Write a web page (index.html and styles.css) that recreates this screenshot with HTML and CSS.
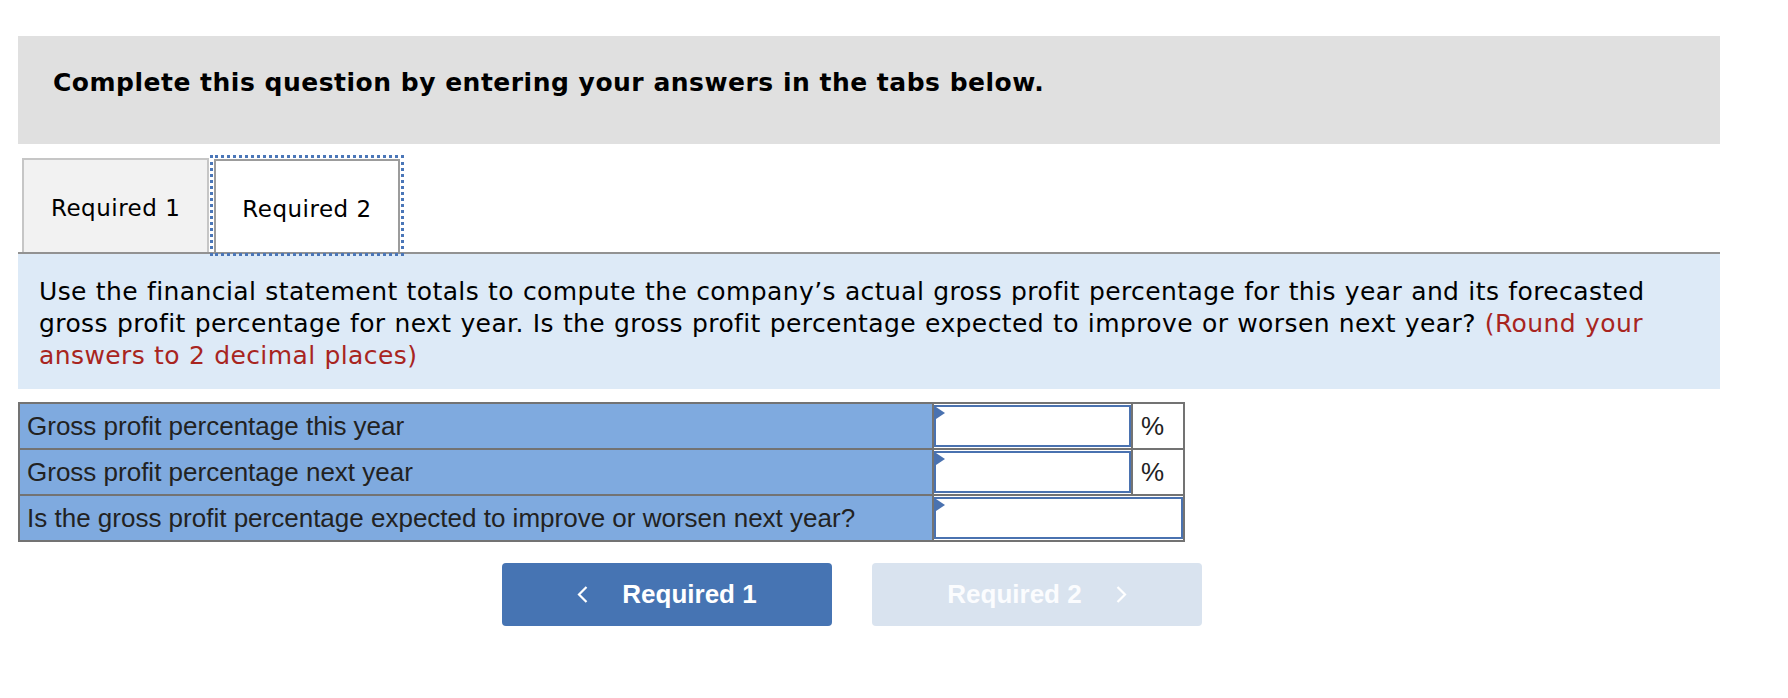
FILE: index.html
```html
<!DOCTYPE html>
<html lang="en">
<head>
<meta charset="utf-8">
<title>Required 2</title>
<link rel="stylesheet" href="styles.css">
</head>
<body>
<div class="page">
  <div class="prompt">Complete this question by entering your answers in the tabs below.</div>

  <div class="tabs">
    <div class="tab">Required 1</div>
    <div class="tab tab-active">Required 2</div>
  </div>

  <div class="question">Use the financial statement totals to compute the company’s actual gross profit percentage for this year and its forecasted gross profit percentage for next year. Is the gross profit percentage expected to improve or worsen next year? <span class="note">(Round your answers to 2 decimal places)</span></div>

  <div class="answers">
    <div class="label">Gross profit percentage this year</div>
    <div class="entry"><input class="field" type="text"><span class="flag"></span></div>
    <div class="unit">%</div>

    <div class="label">Gross profit percentage next year</div>
    <div class="entry"><input class="field" type="text"><span class="flag"></span></div>
    <div class="unit">%</div>

    <div class="label">Is the gross profit percentage expected to improve or worsen next year?</div>
    <div class="entry entry-wide"><input class="field" type="text"><span class="flag"></span></div>
  </div>

  <div class="nav">
    <button class="nav-btn" type="button">
      <svg class="chev" width="11" height="17" viewBox="0 0 11 17"><polyline points="9.5,1 2,8.5 9.5,16" fill="none" stroke="#fff" stroke-width="2.2"/></svg>
      <span>Required 1</span>
    </button>
    <button class="nav-btn disabled" type="button">
      <span>Required 2</span>
      <svg class="chev" width="11" height="17" viewBox="0 0 11 17"><polyline points="1.5,1 9,8.5 1.5,16" fill="none" stroke="#fff" stroke-width="2.2"/></svg>
    </button>
  </div>
</div>
</body>
</html>
```

FILE: styles.css
```css
body {
  margin: 0;
  background: #fff;
}

.page {
  width: 1702px;
  padding: 36px 0 0 18px;
}

.prompt {
  background: #e0e0e0;
  padding: 33px 35px 47px;
  font: bold 25px/28px "DejaVu Sans", Verdana, sans-serif;
  letter-spacing: 0.5px;
  color: #000;
}

.tabs {
  display: flex;
  align-items: flex-end;
  gap: 5px;
  margin-top: 14px;
  padding-left: 4px;
  border-bottom: 2px solid #929292;
}

.tab {
  box-sizing: border-box;
  height: 94px;
  padding: 4px 27px 0;
  display: flex;
  align-items: center;
  border: 2px solid #c6c6c6;
  border-bottom: 0;
  background: #f2f2f2;
  font: 23px "DejaVu Sans", Verdana, sans-serif;
  letter-spacing: 0.5px;
  color: #000;
}

.tab-active {
  height: 93px;
  padding-left: 26px;
  padding-right: 26px;
  background: #fff;
  border-color: #9c9c9c;
  outline: 3px dotted #4a76b8;
  outline-offset: 1px;
}

.question {
  background: #ddeaf7;
  padding: 22px 21px 17px;
  font: 25px/32px "DejaVu Sans", Verdana, sans-serif;
  letter-spacing: 0.4px;
  word-spacing: 0.6px;
  color: #000;
}

.note {
  color: #a8251f;
}

.answers {
  display: grid;
  grid-template-columns: 912px 197px 50px;
  grid-auto-rows: 44px;
  gap: 2px;
  padding: 2px;
  width: max-content;
  margin-top: 13px;
  background: #737373;
  font: 26px "Liberation Sans", Arial, sans-serif;
  color: #222;
}

.label {
  background: #7faadf;
  padding-left: 7px;
  display: flex;
  align-items: center;
}

.entry {
  position: relative;
  background: #fff;
  padding: 1px 0;
}

.entry-wide {
  grid-column: span 2;
}

.field {
  display: block;
  box-sizing: border-box;
  width: 100%;
  height: 100%;
  margin: 0;
  padding: 0 12px;
  border: 2px solid #4a72b0;
  border-radius: 0;
  background: #fff;
  font: inherit;
  outline: none;
}

.flag {
  position: absolute;
  left: 2px;
  top: 3px;
  width: 0;
  height: 0;
  border-top: 6px solid transparent;
  border-bottom: 6px solid transparent;
  border-left: 9px solid #4a72b0;
}

.unit {
  background: #fff;
  padding-left: 8px;
  display: flex;
  align-items: center;
}

.nav {
  display: flex;
  gap: 40px;
  margin: 21px 0 0 484px;
}

.nav-btn {
  width: 330px;
  height: 63px;
  padding: 0;
  border: 0;
  border-radius: 4px;
  background: #4674b3;
  color: #fff;
  font: bold 26px "Liberation Sans", Arial, sans-serif;
  display: flex;
  align-items: center;
  justify-content: center;
  gap: 34px;
}

.nav-btn.disabled {
  background: #d9e3ef;
  color: #fbfcfe;
}

.chev {
  display: block;
}
```
